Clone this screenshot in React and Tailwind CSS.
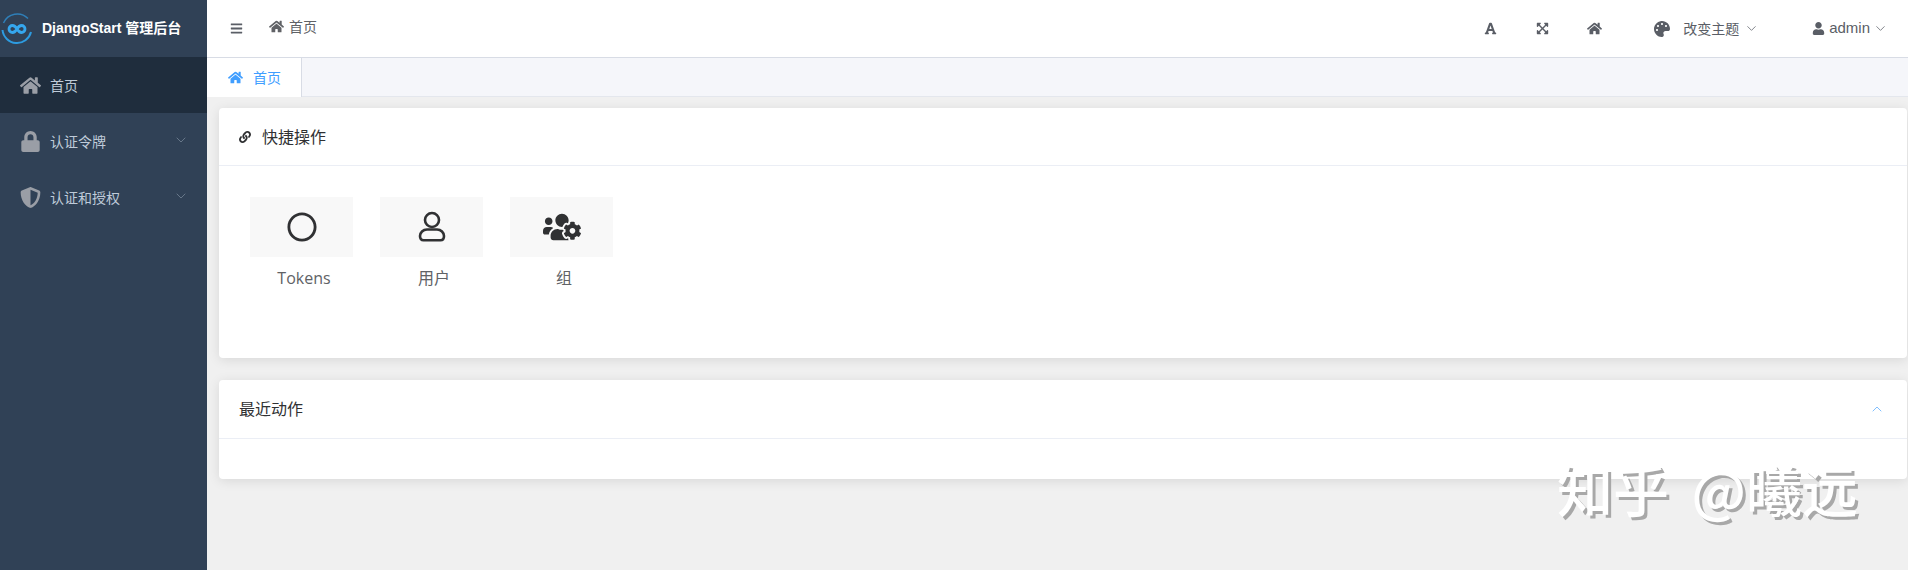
// Admin home page
import { FaHome, FaLock, FaShieldAlt, FaBars, FaFont, FaExpandArrowsAlt, FaPalette, FaUser, FaLink, FaRegCircle, FaUsersCog } from 'react-icons/fa';
import { ChevronDown, ChevronUp } from 'lucide-react';

const FONT = "font-['Open_Sans','Noto_Sans_CJK_SC',sans-serif]";

function UserOutline() {
  return (
    <svg width="28" height="32" viewBox="0 0 28 32" fill="none" stroke="#303133" strokeWidth="2.6">
      <circle cx="14" cy="9" r="7" />
      <path d="M9 18.500h10c4 0 7 3 7 6.500 0 2.500-1.200 4.300-3.500 4.300h-17C3.200 29.300 2 27.500 2 25c0-3.500 3-6.500 7-6.500z" />
    </svg>
  );
}

function Logo() {
  return (
    <svg width="32" height="32" viewBox="0 0 32 32" fill="none">
      <path d="M27 5.500A15 15 0 0 0 2.500 10" stroke="#2f7fb8" strokeWidth="1.500" />
      <path d="M1.500 17A14.500 14.500 0 0 0 30 19" stroke="#2d9be0" strokeWidth="2" />
      <path d="M16 16c-1.500-2.500-2.800-3.500-4.500-3.500a3.500 3.500 0 0 0 0 7c1.700 0 3-1 4.500-3.500zm0 0c1.500-2.500 2.800-3.500 4.500-3.500a3.500 3.500 0 0 1 0 7c-1.700 0-3-1-4.500-3.500z" stroke="#35a7ee" strokeWidth="2.800" />
    </svg>
  );
}

function SideItem({ icon, label, active, sub }) {
  return (
    <div className={`flex items-center h-14 pl-[19px] pr-[18px] ${active ? 'bg-[#1f2d3d]' : ''}`}>
      <span className="w-[22px] flex justify-center text-[#9a9ea6] text-[21px]">{icon}</span>
      <span className="ml-[9px] flex-1 text-[14px] text-[#bfcbd9]">{label}</span>
      {sub && <ChevronDown size={16} strokeWidth={1} className="mb-[3px] text-[#8492a3]" />}
    </div>
  );
}

function Shortcut({ icon, label }) {
  return (
    <div className="w-[103px] mr-[27px] flex flex-col items-center">
      <div className="w-[103px] h-[60px] bg-[#f8f8f8] flex items-center justify-center text-[#303133]">{icon}</div>
      <div className="mt-[9px] ml-[5px] text-[16px] leading-[24px] text-[#606266]">{label}</div>
    </div>
  );
}

export default function App() {
  return (
    <div className={`relative flex h-[570px] w-[1908px] overflow-hidden bg-[#f0f0f0] ${FONT}`}>
      {/* Sidebar */}
      <aside className="w-[207px] shrink-0 bg-[#304156]">
        <div className="h-[57px] flex items-center pl-[1px]">
          <Logo />
          <span className="ml-[9px] text-[14px] font-bold text-white whitespace-nowrap font-['Liberation_Sans','Noto_Sans_CJK_SC',sans-serif]">DjangoStart 管理后台</span>
        </div>
        <SideItem icon={<FaHome />} label="首页" active />
        <SideItem icon={<FaLock />} label="认证令牌" sub />
        <SideItem icon={<FaShieldAlt />} label="认证和授权" sub />
      </aside>

      <div className="flex-1 min-w-0">
        {/* Header */}
        <header className="h-[58px] bg-white border-b border-[#d8dce5] flex items-center text-[#5a5e66]">
          <FaBars className="ml-[23px] text-[13px]" />
          <div className="ml-[26px] mb-[5px] flex items-center text-[14px] text-[#606266]">
            <FaHome className="text-[15px] mr-[5px]" />
            首页
          </div>
          <div className="ml-auto flex items-center">
            <FaFont className="text-[13px] mr-[39px]" />
            <FaExpandArrowsAlt className="text-[13px] mr-[38px]" />
            <FaHome className="text-[15px] mr-[52px]" />
            <FaPalette className="text-[16px] mr-[13px]" />
            <span className="text-[14px]">改变主题</span>
            <ChevronDown size={15} strokeWidth={1.2} className="ml-[5px] mr-[53px]" />
            <FaUser className="text-[13px] mr-[4px]" />
            <span className="text-[15px] font-['Liberation_Sans',sans-serif]">admin</span>
            <ChevronDown size={15} strokeWidth={1.2} className="ml-[3px] mr-[20px]" />
          </div>
        </header>

        {/* Tabs */}
        <div className="h-[39px] bg-[#f5f6fa] border-b border-[#e4e7ed] flex">
          <div className="w-[95px] h-[39px] bg-white border-r border-[#d8dce5] flex items-center pl-[21px] text-[14px] text-[#409eff]">
            <FaHome className="text-[15px] mr-[10px]" />
            首页
          </div>
        </div>

        {/* Cards */}
        <main className="pl-[12px] pr-[1px] pt-[11px]">
          <section className="h-[250px] bg-white rounded-[4px] shadow-[0_2px_12px_0_rgba(0,0,0,0.1)]">
            <div className="h-[58px] px-[20px] flex items-center border-b border-[#ebeef5] text-[16px] text-[#303133]">
              <FaLink className="text-[12px] mr-[11px]" />
              快捷操作
            </div>
            <div className="flex pl-[31px] pt-[31px]">
              <Shortcut icon={<FaRegCircle className="text-[30px]" />} label="Tokens" />
              <Shortcut icon={<UserOutline />} label="用户" />
              <Shortcut icon={<FaUsersCog className="text-[38px]" />} label="组" />
            </div>
          </section>

          <section className="mt-[22px] h-[99px] bg-white rounded-[4px] shadow-[0_2px_12px_0_rgba(0,0,0,0.1)]">
            <div className="h-[59px] pl-[20px] pr-[22px] flex items-center justify-between border-b border-[#ebeef5] text-[16px] text-[#303133]">
              最近动作
              <ChevronUp size={16} strokeWidth={1} className="text-[#409eff]" />
            </div>
          </section>
        </main>
      </div>

      {/* Watermark */}
      <div className="absolute left-[1557px] top-[452px] whitespace-nowrap text-[56px] leading-[72px] font-medium text-white [word-spacing:10px] [text-shadow:3px_3px_0_#a8a8a8] font-['Noto_Sans_CJK_SC',sans-serif]">
        知乎 @曦远
      </div>
    </div>
  );
}
